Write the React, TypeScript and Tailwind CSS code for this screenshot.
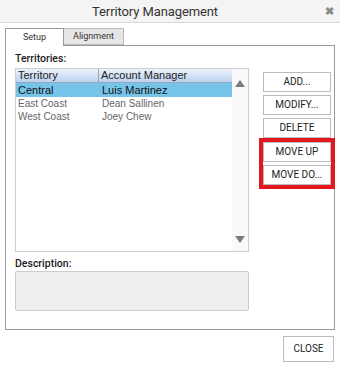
const rows = [
  { territory: "Central", manager: "Luis Martinez", selected: true },
  { territory: "East Coast", manager: "Dean Sallinen", selected: false },
  { territory: "West Coast", manager: "Joey Chew", selected: false },
];

function Btn({ label }: { label: string }) {
  return (
    <button className="h-[20px] w-[68px] border border-[#b9bcc0] bg-white text-[10px] text-[#222] flex items-center justify-center leading-none">
      {label}
    </button>
  );
}

export default function App() {
  return (
    <div className="w-[340px] h-[365px] bg-white relative font-['Roboto',sans-serif] text-[#333] overflow-hidden">
      {/* title bar */}
      <div className="h-[23px] bg-[#f4f4f4] border-b border-[#d8d8d8] relative flex items-center">
        <div className="pl-[92px] text-[13px] tracking-[-0.1px] leading-none text-[#333]">Territory Management</div>
        <div className="absolute right-[6px] top-[6px] text-[11px] font-bold text-[#8a8a8a] leading-none">✖</div>
      </div>

      {/* tabs */}
      <div className="flex mt-[5px] ml-[5px] h-[18px] text-[9px] leading-none">
        <div className="w-[59px] border border-b-0 border-[#999] bg-white flex items-center justify-center relative z-10 h-[18px]">
          Setup
        </div>
        <div className="w-[60px] border border-l-0 border-[#bbb] bg-[#e6e6e6] flex items-center justify-center h-[17px]">
          Alignment
        </div>
      </div>

      {/* panel */}
      <div className="mx-[5px] -mt-px border border-[#999] h-[285px] flex">
        <div className="flex flex-col pl-[9px] pt-[8px] w-[252px]">
          <div className="text-[10.5px] font-medium text-[#222] leading-none h-[14px]">Territories:</div>
          <div className="h-[184px] w-[234px] border border-[#cfcfcf] flex">
            <div className="flex-1 flex flex-col font-['Liberation_Sans',Arial,sans-serif]">
              <div className="h-[14px] flex border-b border-[#9aa7b8] bg-gradient-to-b from-[#eef3fb] to-[#bcd0ef] text-[11px] text-[#222] leading-none">
                <div className="w-[83px] border-r border-[#9aa7b8] pl-[2px] flex items-center">Territory</div>
                <div className="flex-1 pl-[2px] flex items-center">Account Manager</div>
              </div>
              {rows.map((r) => (
                <div
                  key={r.territory}
                  className={
                    r.selected
                      ? "h-[14px] flex bg-[#76c4e8] text-[11px] text-[#111] leading-none"
                      : "h-[13px] flex text-[10px] text-[#666] leading-none"
                  }
                >
                  <div className="w-[83px] pl-[2px] flex items-center">{r.territory}</div>
                  <div className="flex-1 pl-[3px] flex items-center">{r.manager}</div>
                </div>
              ))}
            </div>
            <div className="w-[16px] bg-[#f9f9f9] flex flex-col items-center justify-between pt-[11px] pb-[8px]">
              <svg width="10" height="7" viewBox="0 0 10 7">
                <path d="M0 7 L5 0 L10 7 Z" fill="#7a7a7a" />
              </svg>
              <svg width="10" height="7" viewBox="0 0 10 7">
                <path d="M0 0 L10 0 L5 7 Z" fill="#7a7a7a" />
              </svg>
            </div>
          </div>
          <div className="text-[10.5px] font-medium text-[#222] leading-none mt-[7px] h-[11px]">Description:</div>
          <div className="mt-[1px] h-[40px] w-[234px] bg-[#eeeeee] border border-[#cccccc] rounded-[2px]" />
        </div>

        <div className="flex flex-col gap-[3px] pt-[26px] pl-[5px]">
          <Btn label="ADD..." />
          <Btn label="MODIFY..." />
          <Btn label="DELETE" />
          <div className="-mx-[4px] -mt-[3px] border-[4px] border-[#e3171c] flex flex-col gap-[3px]">
            <Btn label="MOVE UP" />
            <Btn label="MOVE DO..." />
          </div>
        </div>
      </div>

      {/* footer */}
      <div className="flex justify-end pr-[6px] mt-[6px]">
        <button className="h-[26px] w-[51px] border border-[#b9bcc0] bg-white text-[10px] text-[#222] leading-none">
          CLOSE
        </button>
      </div>
    </div>
  );
}
